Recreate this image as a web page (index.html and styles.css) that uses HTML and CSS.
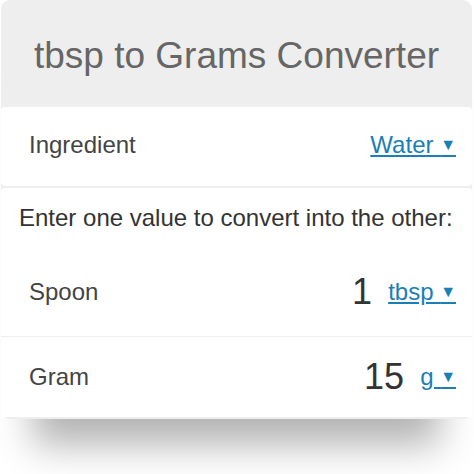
FILE: index.html
```html
<!DOCTYPE html>
<html lang="en">
<head>
    <meta charset="UTF-8">
    <meta name="viewport" content="width=device-width, initial-scale=1.0">
    <title>tbsp to Grams Converter</title>
    <link rel="stylesheet" href="styles.css">
</head>
<body>
    <div class="converter">
        <h1 class="title">tbsp to Grams Converter</h1>

        <div class="row ingredient">
            <span class="label">Ingredient</span>
            <a href="#" class="select">Water <span class="caret">&#9660;</span></a>
        </div>

        <div class="values">
            <p class="hint">Enter one value to convert into the other:</p>
            <div class="row spoon">
                <span class="label">Spoon</span>
                <span class="amount">1</span>
                <a href="#" class="select">tbsp <span class="caret">&#9660;</span></a>
            </div>
            <div class="row gram">
                <span class="label">Gram</span>
                <span class="amount">15</span>
                <a href="#" class="select">g <span class="caret">&#9660;</span></a>
            </div>
        </div>
    </div>
</body>
</html>
```

FILE: styles.css
```css
body {
    margin: 0;
    padding-bottom: 60px;
    background-color: white;
    font-family: "Liberation Sans", Arial, sans-serif;
}
.converter {
    width: 471px;
    margin-left: 1px;
    padding-bottom: 2px;
    border-radius: 9px;
    background-color: #eeeeee;
    /* soft drop shadow under the card only */
    box-shadow: 0 58px 36px -32px rgba(0, 0, 0, 0.3);
}
.title {
    margin: 0;
    height: 107px;
    line-height: 112px;
    text-align: center;
    font-size: 37px;
    font-weight: normal;
    color: #666666;
}
.row {
    display: flex;
    align-items: center;
    background-color: white;
    padding: 0 16px 0 28px;
}
.ingredient {
    height: 79px;
    padding-bottom: 3px;
    box-sizing: border-box;
    border-radius: 4px;
    margin-bottom: 2px;
}
.values {
    background-color: white;
    border-radius: 4px;
}
.hint {
    margin: 0;
    padding: 16px 0 0 18px;
    font-size: 24px;
    color: #333333;
}
.spoon {
    height: 105px;
    padding-top: 16px;
    box-sizing: border-box;
    border-bottom: 1px solid #eeeeee;
}
.gram {
    height: 80px;
    border-radius: 0 0 4px 4px;
}
.label {
    flex: 1;
    font-size: 24px;
    color: #444444;
}
.amount {
    font-size: 36px;
    color: #333333;
    margin-right: 16px;
}
.select {
    font-size: 24px;
    color: #1a7fb5;
    text-decoration: underline;
}
.caret {
    font-size: 16px;
    vertical-align: 3px;
}
```
